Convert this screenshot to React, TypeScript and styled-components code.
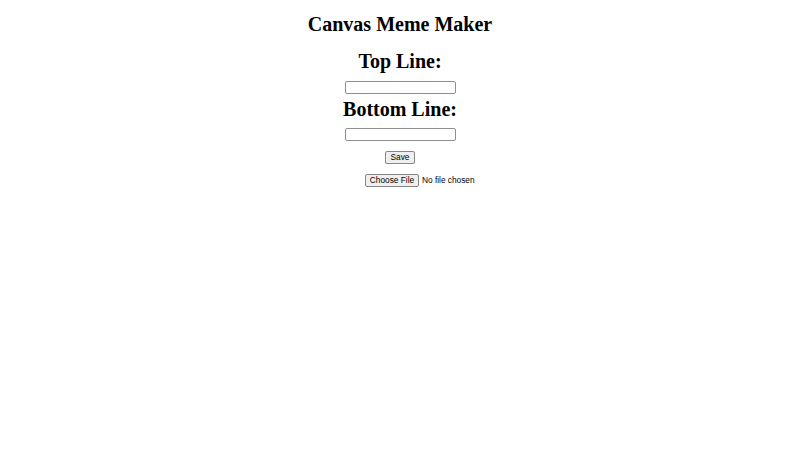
import styled, { createGlobalStyle } from "styled-components";

const GlobalStyle = createGlobalStyle`
  html, body {
    margin: 0;
    background: #ffffff;
  }
  body {
    font-family: "Liberation Serif", "Times New Roman", serif;
    color: #000;
  }
`;

const Page = styled.div`
  display: flex;
  flex-direction: column;
  align-items: center;
  text-align: center;
`;

const Heading = styled.h1<{ $gap: number }>`
  margin: ${(p) => p.$gap}px 0 0;
  font-size: 20px;
  line-height: 23px;
  font-weight: bold;
`;

const TextField = styled.input<{ $gap: number }>`
  display: block;
  box-sizing: border-box;
  width: 111px;
  height: 13px;
  margin: ${(p) => p.$gap}px 0 0;
  padding: 0 2px;
  border: 1px solid #8f8f8f;
  border-radius: 2px;
  font-size: 8.3px;
  font-family: "Liberation Sans", Arial, sans-serif;
  background: #fff;
`;

const SaveButton = styled.button`
  box-sizing: border-box;
  height: 13px;
  width: 30px;
  margin-top: 10px;
  padding: 0;
  border: 1px solid #858585;
  border-radius: 2px;
  background: #efefef;
  color: #000;
  font-family: "Liberation Sans", Arial, sans-serif;
  font-size: 8.3px;
  line-height: 11px;
`;

const FileRow = styled.div`
  width: 120px;
  margin: 10px 0 0 50px;
  display: flex;
  text-align: left;
`;

const FilePicker = styled.input`
  width: 120px;
  height: 13px;
  padding: 0;
  margin: 0;
  font-family: "Liberation Sans", Arial, sans-serif;
  font-size: 8.3px;
  line-height: 13px;
  color: #000;

  &::file-selector-button {
    box-sizing: border-box;
    height: 13px;
    width: 54px;
    margin: 0 3px 0 0;
    padding: 0;
    border: 1px solid #858585;
    border-radius: 2px;
    background: #efefef;
    color: #000;
    font-family: "Liberation Sans", Arial, sans-serif;
    font-size: 8.3px;
    line-height: 11px;
  }
`;

export default function App() {
  return (
    <Page>
      <GlobalStyle />
      <Heading $gap={13}>Canvas Meme Maker</Heading>
      <Heading $gap={14}>Top Line:</Heading>
      <TextField type="text" $gap={8} />
      <Heading $gap={4}>Bottom Line:</Heading>
      <TextField type="text" $gap={7} />
      <SaveButton type="button">Save</SaveButton>
      <FileRow>
        <FilePicker type="file" accept="image/*" />
      </FileRow>
    </Page>
  );
}
